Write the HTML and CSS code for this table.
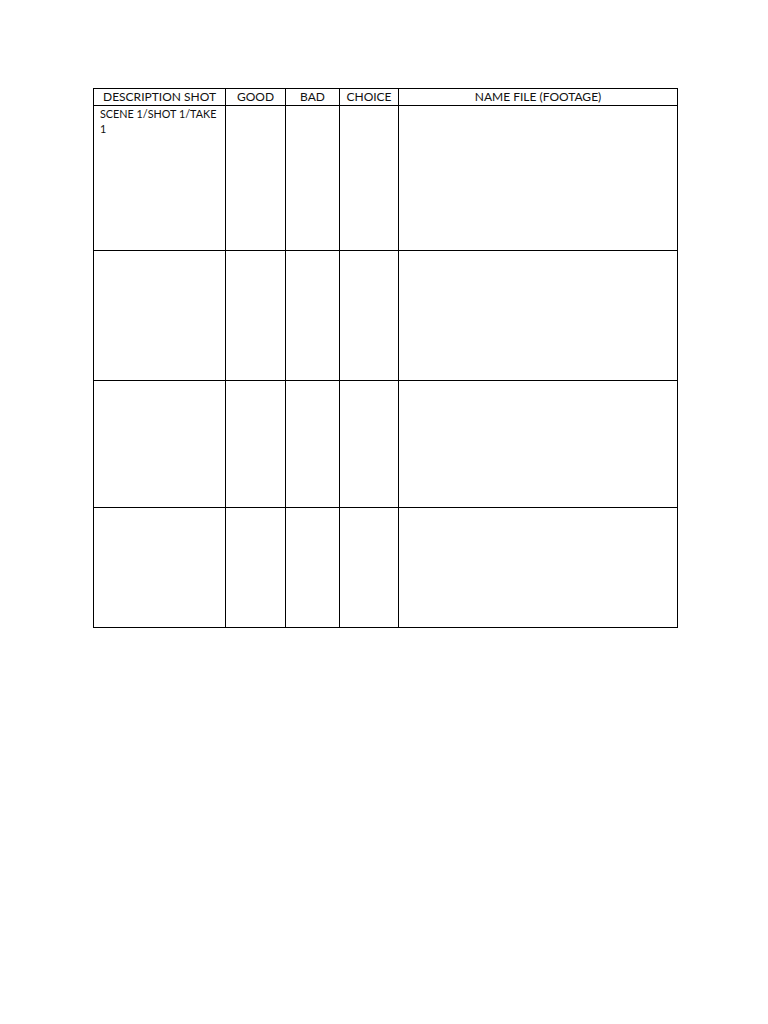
FILE: index.html
```html
<!DOCTYPE html>
<html>
<head>
<meta charset="utf-8">
<link rel="stylesheet" href="styles.css">
</head>
<body>
<table class="log">
  <colgroup>
    <col class="c-desc">
    <col class="c-good">
    <col class="c-bad">
    <col class="c-choice">
    <col class="c-name">
  </colgroup>
  <thead>
    <tr class="head">
      <th>DESCRIPTION SHOT</th>
      <th>GOOD</th>
      <th>BAD</th>
      <th>CHOICE</th>
      <th>NAME FILE (FOOTAGE)</th>
    </tr>
  </thead>
  <tbody>
    <tr class="r1"><td class="desc">SCENE 1/SHOT 1/TAKE 1</td><td></td><td></td><td></td><td></td></tr>
    <tr class="r2"><td></td><td></td><td></td><td></td><td></td></tr>
    <tr class="r3"><td></td><td></td><td></td><td></td><td></td></tr>
    <tr class="r4"><td></td><td></td><td></td><td></td><td></td></tr>
  </tbody>
</table>
</body>
</html>
```
FILE: styles.css
```css
html, body {
  margin: 0;
  padding: 0;
  background: #ffffff;
}
body {
  font-family: Lato, "Liberation Sans", sans-serif;
  color: #000;
}
.log {
  border-collapse: collapse;
  table-layout: fixed;
  width: 584px;
  margin: 88px 0 0 93px;
}
.c-desc { width: 132px; }
.c-good { width: 60px; }
.c-bad { width: 54px; }
.c-choice { width: 59px; }
.c-name { width: 279px; }
.log th, .log td {
  border: 1px solid #000;
  padding: 0 4px;
  vertical-align: top;
}
.log th {
  font-weight: normal;
  font-size: 12px;
  line-height: 16px;
  height: 16px;
  text-align: center;
  white-space: nowrap;
  color: #111;
}
.log td.desc {
  font-size: 10.8px;
  line-height: 15px;
  padding-top: 0;
  padding-left: 6px;
  padding-right: 2px;
  color: #111;
}
.r1 td { height: 144px; }
.r2 td { height: 129px; }
.r3 td { height: 126px; }
.r4 td { height: 119px; }
```
